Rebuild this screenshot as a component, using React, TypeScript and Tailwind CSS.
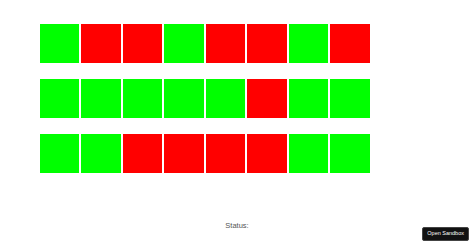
const ROWS = [
  [1, 0, 0, 1, 0, 0, 1, 0],
  [1, 1, 1, 1, 1, 0, 1, 1],
  [1, 1, 0, 0, 0, 0, 1, 1],
];

export default function App() {
  return (
    <div className="min-h-[248px] bg-white font-['Liberation_Sans',Arial,sans-serif]">
      {/* Board */}
      <div className="flex flex-col gap-[15.5px] pt-[23.5px] pl-[39.5px]">
        {ROWS.map((row, r) => (
          <div key={r} className="flex gap-[2px]">
            {row.map((on, c) => (
              <div
                key={c}
                className={`h-[39.5px] w-[39.5px] ${on ? "bg-[#00ff00]" : "bg-[#ff0000]"}`}
              />
            ))}
          </div>
        ))}
      </div>

      <p className="mt-[48px] text-center text-[7.5px] leading-[10px] text-[#555]">
        Status:
      </p>

      {/* CodeSandbox overlay button */}
      <button className="fixed right-[5px] bottom-[7px] flex h-[14px] items-center rounded-[2px] border border-[#444] bg-[#111] px-[4px] text-[5.5px] leading-none text-white">
        Open Sandbox
      </button>
    </div>
  );
}
